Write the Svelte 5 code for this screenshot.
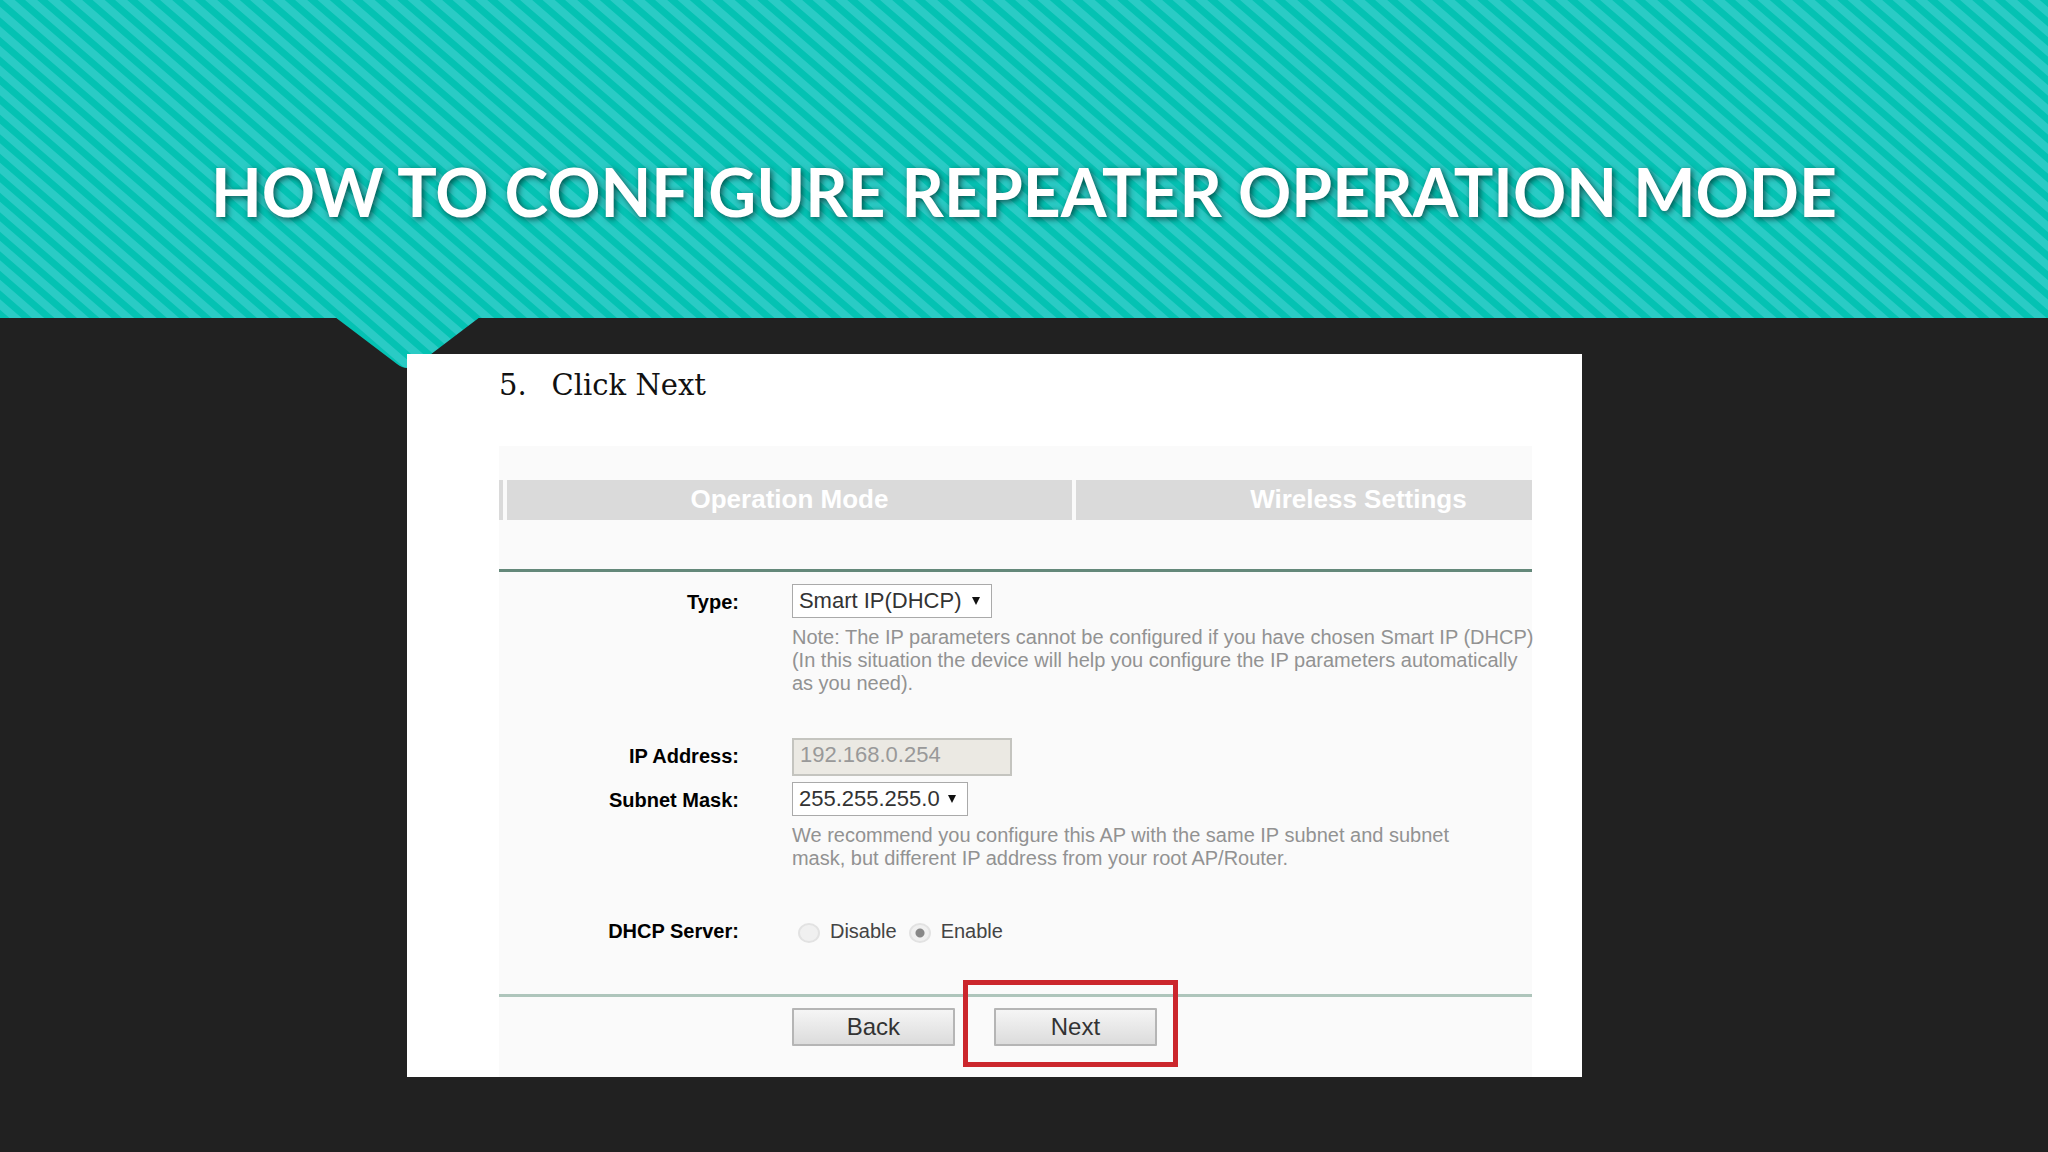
<script>
	let type = "Smart IP(DHCP)";
	let mask = "255.255.255.0";
	let ip = "192.168.0.254";
	let dhcp = "enable";
</script>

<main>
	<header>
		<svg class="banner" width="100%" height="372" aria-hidden="true">
			<defs>
				<!-- two stripe periods per tile -->
				<pattern
					id="stripes"
					y="12"
					width="45"
					height="39"
					patternUnits="userSpaceOnUse"
				>
					<rect width="45" height="39" fill="#04c2b3" />
					<path
						d="M-45 -39 L90 78 M-45 -58.5 L90 58.5 M-45 -19.5 L90 97.5 M-45 -78 L90 39 M-45 0 L90 117"
						stroke="#2acbc5"
						stroke-width="8"
					/>
				</pattern>
			</defs>
			<rect width="100%" height="318" fill="url(#stripes)" />
			<path
				d="M335 317 L397 364 Q407 372 418 364 L480 317 Z"
				fill="url(#stripes)"
			/>
		</svg>
		<h1>HOW TO CONFIGURE REPEATER OPERATION MODE</h1>
	</header>

	<section class="sheet">
		<h2><span>5.</span>Click Next</h2>

		<form class="panel" on:submit|preventDefault>
			<div class="steps">
				<div></div>
				<div>Operation Mode</div>
				<div>Wireless Settings</div>
			</div>

			<div class="fields">
				<label for="type">Type:</label>
				<div>
					<div class="select type">
						<select id="type" bind:value={type}>
							<option>Smart IP(DHCP)</option>
							<option>Static IP</option>
						</select>
					</div>
					<p>
						Note: The IP parameters cannot be configured if you have chosen
						Smart IP (DHCP)<br />(In this situation the device will help you
						configure the IP parameters automatically<br />as you need).
					</p>
				</div>

				<label for="ip">IP Address:</label>
				<div><input id="ip" type="text" value={ip} disabled /></div>

				<label for="mask">Subnet Mask:</label>
				<div>
					<div class="select mask">
						<select id="mask" bind:value={mask}>
							<option>255.255.255.0</option>
							<option>255.255.0.0</option>
						</select>
					</div>
					<p>
						We recommend you configure this AP with the same IP subnet and
						subnet<br />mask, but different IP address from your root AP/Router.
					</p>
				</div>

				<span class="label" id="dhcp">DHCP Server:</span>
				<div class="radios" role="radiogroup" aria-labelledby="dhcp">
					<label>
						<input type="radio" bind:group={dhcp} value="disable" disabled />
						Disable
					</label>
					<label>
						<input type="radio" bind:group={dhcp} value="enable" disabled />
						Enable
					</label>
				</div>
			</div>

			<div class="actions">
				<button type="button">Back</button>
				<div class="next"><button type="submit">Next</button></div>
			</div>
		</form>
	</section>
</main>

<style>
	:global(body) {
		background: #212121;
	}

	main {
		min-height: 100vh;
		font-family: "Liberation Sans", Arial, sans-serif;
	}

	header {
		position: relative;
		height: 318px;
		margin-bottom: 36px;
	}

	.banner {
		position: absolute;
		top: 0;
		left: 0;
	}

	h1 {
		position: relative;
		margin: 0;
		padding-top: 152px;
		color: #fff;
		font: bold 66px/80px Lato, sans-serif;
		text-align: center;
		white-space: nowrap;
		text-shadow: 2px 2px 6px rgba(0, 0, 0, 0.6);
	}

	.sheet {
		position: relative;
		box-sizing: border-box;
		width: 57.4%;
		margin-left: 19.87%;
		padding: 12px 50px 0 92px;
		background: #fff;
	}

	h2 {
		margin: 0;
		color: #111;
		font: 29px/38px "DejaVu Serif", serif;
		display: flex;
		gap: 25px;
	}

	.panel {
		margin-top: 42px;
		padding-top: 34px;
		background: #fafafa;
	}

	.steps {
		display: grid;
		grid-template-columns: 4px 565px 565px;
		gap: 4px;
		height: 40px;
		overflow: hidden;
		color: #fff;
		font: bold 26px/38px "Liberation Sans", Arial, sans-serif;
		text-align: center;
	}

	.steps div {
		background: #dadada;
	}

	.fields {
		display: grid;
		grid-template-columns: 240px 1fr;
		column-gap: 53px;
		margin-top: 49px;
		padding-top: 12px;
		border-top: 3px solid #64887a;
	}

	.fields > label,
	.label {
		font: bold 20px/36px "Liberation Sans", Arial, sans-serif;
		text-align: right;
	}

	.select {
		position: relative;
	}

	.select::after {
		content: "";
		position: absolute;
		top: 13px;
		right: 12px;
		border: 4px solid transparent;
		border-top: 8px solid #111;
		border-bottom: 0;
		pointer-events: none;
	}

	.type {
		width: 200px;
	}

	.mask {
		width: 176px;
	}

	select,
	input[type="text"] {
		box-sizing: border-box;
		display: block;
		height: 34px;
		width: 100%;
		margin: 0;
		padding: 0 6px 2px;
		appearance: none;
		border: 1px solid #aaa;
		border-radius: 0;
		background: #fff;
		color: #333;
		font: 22px "Liberation Sans", Arial, sans-serif;
	}

	input[type="text"] {
		width: 220px;
		height: 38px;
		margin-bottom: 6px;
		padding-bottom: 4px;
		border: 2px solid #c4c4bf;
		background: #ebe9e3;
		color: #999;
	}

	p {
		margin: 8px 0 43px;
		color: #929292;
		font-size: 20px;
		line-height: 23px;
		white-space: nowrap;
	}

	.radios {
		display: flex;
		gap: 12px;
		padding-left: 6px;
		font-size: 20px;
		line-height: 34px;
		color: #444;
	}

	.radios label {
		display: flex;
		align-items: center;
		gap: 10px;
	}

	input[type="radio"] {
		box-sizing: border-box;
		width: 22px;
		height: 20px;
		margin: 4px 0 0;
		appearance: none;
		border: 2px solid #e2e2e2;
		border-radius: 50%;
		background: #f0f0f0;
	}

	input[type="radio"]:checked {
		background: radial-gradient(circle, #888 4px, #f0f0f0 5px);
	}

	.actions {
		display: flex;
		align-items: flex-start;
		margin-top: 45px;
		height: 80px;
		padding-left: 293px;
		border-top: 3px solid #aec5bb;
	}

	button {
		display: block;
		width: 163px;
		height: 38px;
		margin-top: 11px;
		padding: 0;
		border: 2px solid #b5b5b5;
		border-radius: 1px;
		background: linear-gradient(#f5f5f5, #dcdcdc);
		color: #333;
		font: 24px/32px "Liberation Sans", Arial, sans-serif;
	}

	.next {
		margin: -17px 0 0 8px;
		padding: 12px 16px 16px 26px;
		border: 5px solid #cb262c;
	}
</style>
